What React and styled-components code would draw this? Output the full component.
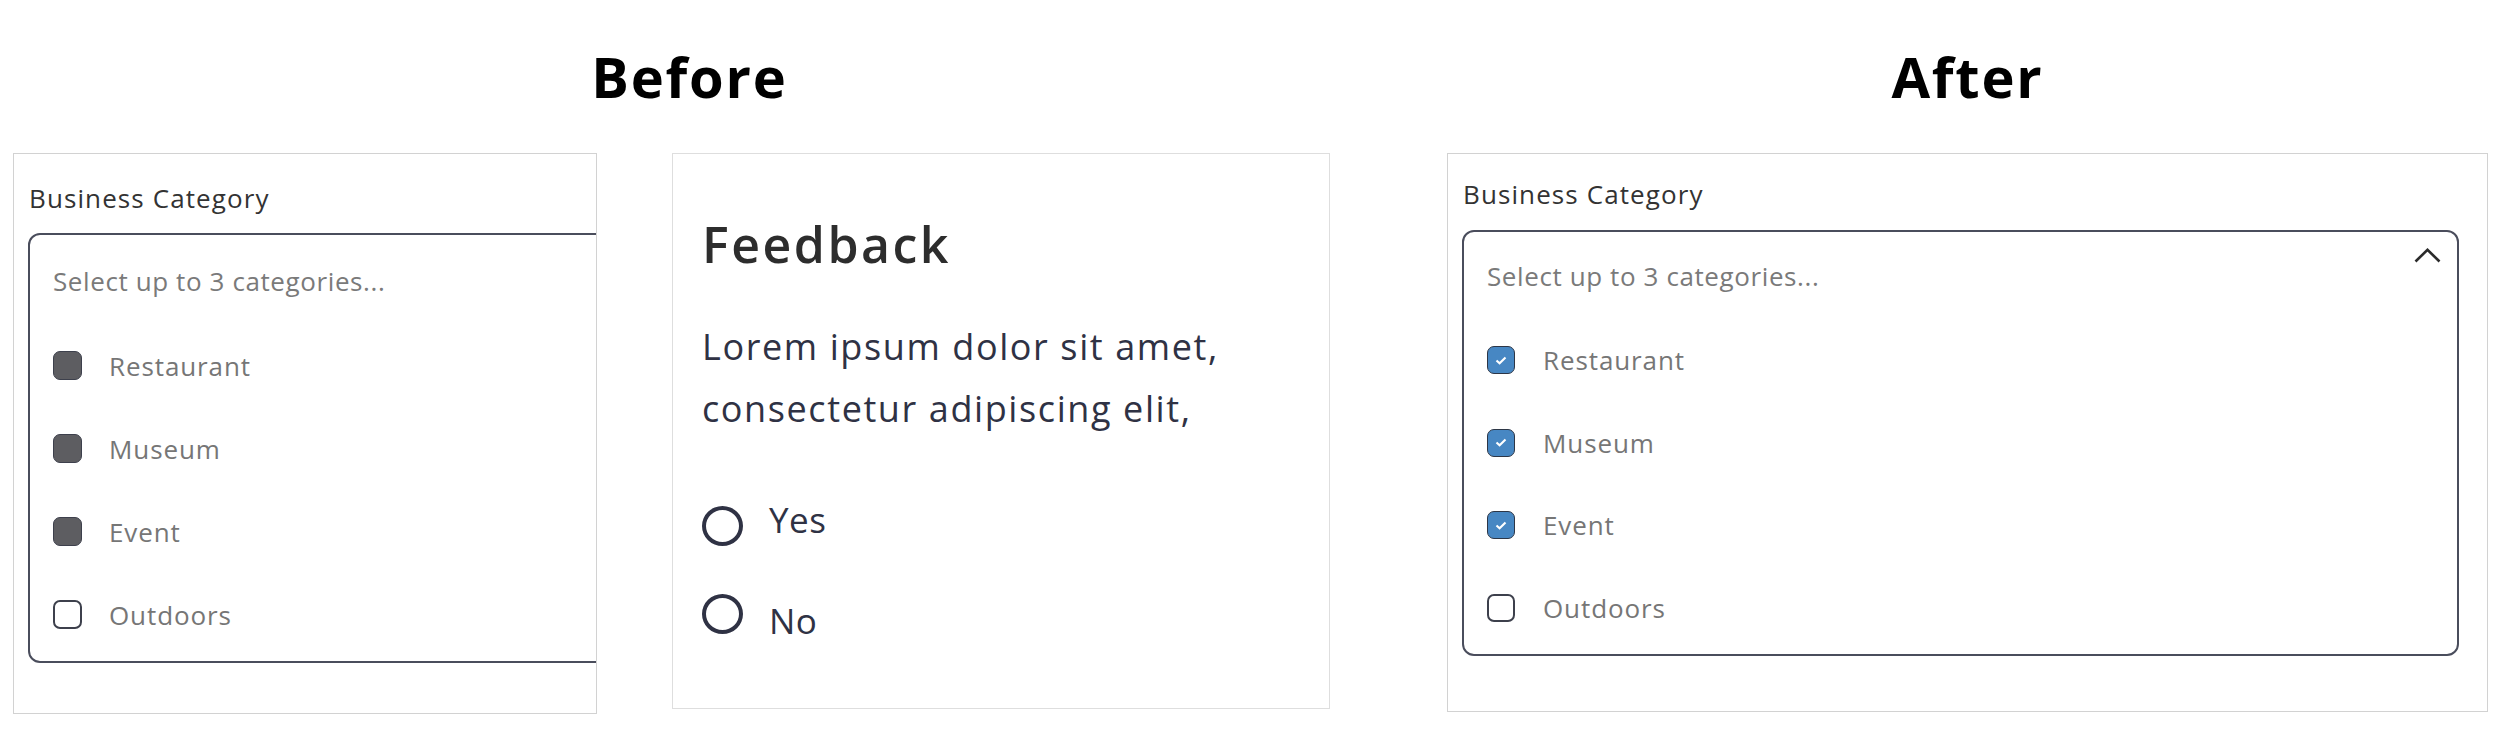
import React from "react";
import styled, { createGlobalStyle } from "styled-components";

const categories = [
  { name: "Restaurant", selected: true },
  { name: "Museum", selected: true },
  { name: "Event", selected: true },
  { name: "Outdoors", selected: false },
];

const GlobalStyle = createGlobalStyle`
  body {
    margin: 0;
    background: #ffffff;
    font-family: "Open Sans", "Liberation Sans", sans-serif;
  }
`;

const CategoryCard = ({ after }) => {
  return (
    <Panel>
      <Field $after={after}>
        <Label>Business Category</Label>
        <SelectBox $after={after}>
          <SelectHead>
            <Placeholder>Select up to 3 categories...</Placeholder>
            {after ? (
              <Chevron viewBox="0 0 27 15">
                <polyline points="1.5,13.5 13.5,1.8 25.5,13.5" />
              </Chevron>
            ) : null}
          </SelectHead>
          {categories.map((cat) => (
            <Option key={cat.name} $after={after}>
              <Box
                $after={after}
                $state={!cat.selected ? "empty" : after ? "checked" : "filled"}
              >
                {cat.selected && after ? (
                  <svg viewBox="0 0 12 9" width="12" height="9">
                    <polyline points="1.5,4.5 4.6,7.3 10.5,1.5" />
                  </svg>
                ) : null}
              </Box>
              <OptionText>{cat.name}</OptionText>
            </Option>
          ))}
        </SelectBox>
      </Field>
    </Panel>
  );
};

const App = () => {
  return (
    <>
      <GlobalStyle />
      <Page>
        <BeforeColumn>
          <Title $shift={36}>Before</Title>
          <CategoryCard />
          <FeedbackPanel>
            <Heading>Feedback</Heading>
            <Lead>
              Lorem ipsum dolor sit amet,
              <br />
              consectetur adipiscing elit,
            </Lead>
            <Radios>
              <RadioRow>
                <Radio />
                <RadioText $nudge={-12}>Yes</RadioText>
              </RadioRow>
              <RadioRow>
                <Radio />
                <RadioText $nudge={14}>No</RadioText>
              </RadioRow>
            </Radios>
          </FeedbackPanel>
        </BeforeColumn>
        <AfterColumn>
          <Title>After</Title>
          <CategoryCard after />
        </AfterColumn>
      </Page>
    </>
  );
};

const Page = styled.main`
  display: flex;
  align-items: flex-start;
  gap: 117px;
  padding: 46px 0 0 13px;
`;
const BeforeColumn = styled.section`
  display: grid;
  grid-template-columns: 584px 658px;
  column-gap: 75px;
  row-gap: 47px;
  align-items: start;
`;
const AfterColumn = styled.section`
  width: 1041px;
  display: flex;
  flex-direction: column;
  gap: 47px;
`;
const Title = styled.h1`
  grid-column: 1 / -1;
  margin: 0;
  padding-left: ${(p) => p.$shift || 0}px;
  font-size: 56px;
  line-height: 60px;
  font-weight: 700;
  letter-spacing: 1.8px;
  color: #000;
  text-align: center;
`;
const Panel = styled.div`
  border: 1px solid #d2d2d2;
  overflow: hidden;
`;
const Field = styled.div`
  padding: ${(p) => (p.$after ? "24px 28px 55px 14px" : "28px 0 50px 14px")};
`;
const Label = styled.div`
  padding-left: 1px;
  font-size: 26px;
  line-height: 32px;
  letter-spacing: 1.1px;
  color: #333;
`;
const SelectBox = styled.div`
  box-sizing: border-box;
  width: ${(p) => (p.$after ? "auto" : "720px")};
  margin-top: ${(p) => (p.$after ? 20 : 19)}px;
  padding: ${(p) => (p.$after ? "28px 16px 30px 23px" : "30px 16px 30px 23px")};
  display: flex;
  flex-direction: column;
  gap: ${(p) => (p.$after ? 50.5 : 51)}px;
  border: 2px solid #4a4d5c;
  border-radius: 12px;
`;
const SelectHead = styled.div`
  display: flex;
  justify-content: space-between;
  align-items: flex-start;
  margin-bottom: 1.5px;
`;
const Placeholder = styled.div`
  font-size: 26px;
  line-height: 32px;
  letter-spacing: 0.6px;
  color: #7a7a7a;
`;
const Chevron = styled.svg`
  width: 27px;
  height: 15px;
  margin-top: -12px;
  fill: none;
  stroke: #2b2b2b;
  stroke-width: 2.6;
`;
const Option = styled.div`
  display: flex;
  align-items: center;
  gap: ${(p) => (p.$after ? 28 : 27)}px;
  height: 32px;
`;
const Box = styled.span`
  box-sizing: border-box;
  width: ${(p) => (p.$after ? 28 : 29)}px;
  height: ${(p) => (p.$after ? 28 : 29)}px;
  display: flex;
  align-items: center;
  justify-content: center;
  border-radius: 7px;
  border: ${(p) => (p.$state === "empty" ? "2px" : "1.5px")} solid
    ${(p) => (p.$state === "checked" ? "#2d3646" : "#3d404c")};
  background: ${(p) =>
    p.$state === "checked" ? "#4787c3" : p.$state === "filled" ? "#5d5d61" : "#fff"};
  svg {
    fill: none;
    stroke: #fff;
    stroke-width: 2.1;
  }
`;
const OptionText = styled.span`
  font-size: 26px;
  line-height: 32px;
  letter-spacing: 0.9px;
  color: #767676;
`;
const FeedbackPanel = styled.div`
  border: 1px solid #dedede;
  padding: 60px 32px 74px 29px;
`;
const Heading = styled.h2`
  margin: 0;
  font-size: 50px;
  line-height: 60px;
  font-weight: 600;
  letter-spacing: 2.5px;
  color: #2d2d2d;
`;
const Lead = styled.p`
  margin: 42px 0 0;
  font-size: 36px;
  line-height: 62px;
  letter-spacing: 1.6px;
  color: #2f3244;
`;
const Radios = styled.div`
  margin-top: 66px;
  display: flex;
  flex-direction: column;
  gap: 48px;
`;
const RadioRow = styled.label`
  display: flex;
  align-items: center;
  gap: 26px;
  height: 40px;
`;
const Radio = styled.span`
  box-sizing: border-box;
  flex-shrink: 0;
  width: 41px;
  height: 40px;
  border: 4px solid #2f3244;
  border-radius: 50%;
`;
const RadioText = styled.span`
  margin-top: ${(p) => p.$nudge || 0}px;
  font-size: 35px;
  line-height: 40px;
  letter-spacing: 0.5px;
  color: #2f3244;
`;

export default App;
